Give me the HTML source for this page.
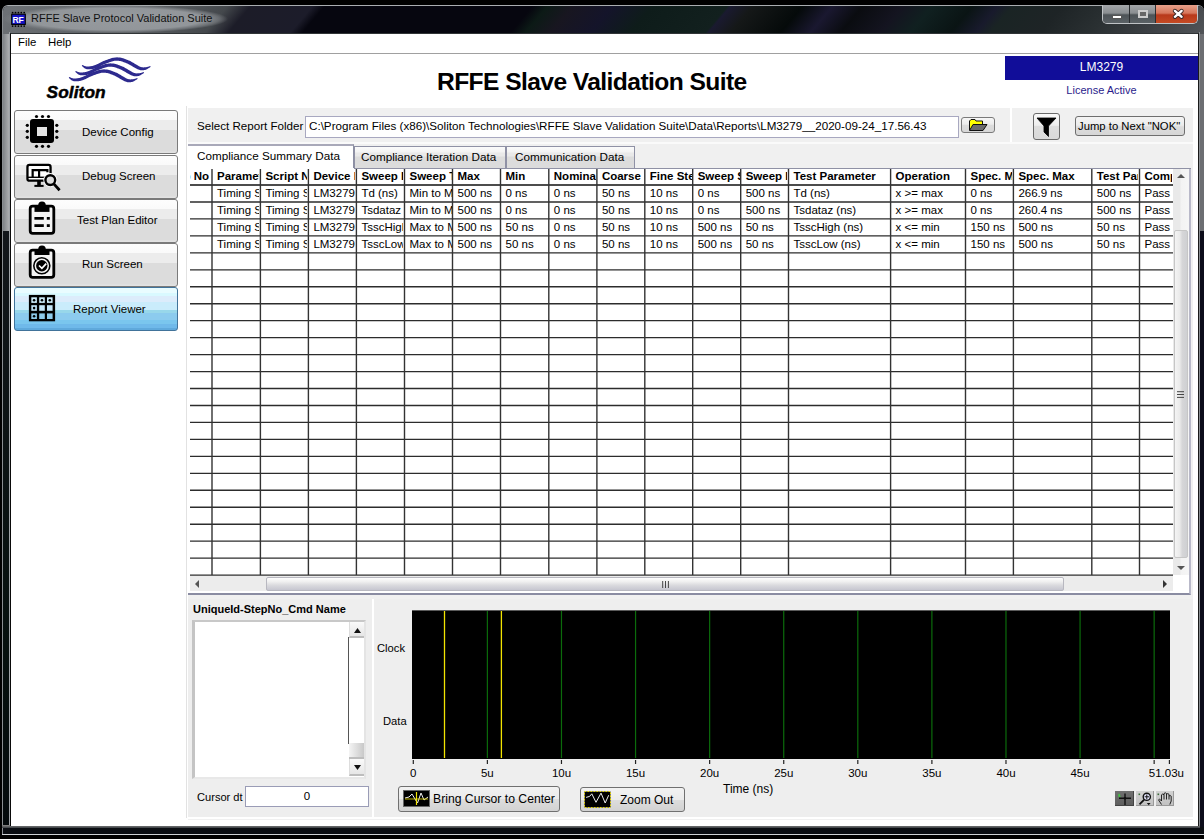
<!DOCTYPE html>
<html><head><meta charset="utf-8">
<style>
*{box-sizing:border-box;margin:0;padding:0}
html,body{width:1204px;height:839px;overflow:hidden;background:#000;font-family:"Liberation Sans",sans-serif;color:#000}
.a{position:absolute}
.t{position:absolute;white-space:nowrap;line-height:1}
.nb{left:14px;width:164px;height:44px;border:1px solid #7a7a7a;border-radius:3px;background:linear-gradient(#fdfdfd 0,#fafafa 8.5px,#ececec 9px,#ececec 19px,#dcdcdc 19.5px,#dcdcdc 40px,#e2e2e2 41px)}
.nb.blue{border-color:#41739a;background:linear-gradient(#e9fcff 0,#e9fcff 5.5px,#d9f9ff 5.5px,#d9f9ff 8.5px,#dcecfb 8.5px,#dcecfb 14.5px,#caecfb 14.5px,#caecfb 22.5px,#98d7ea 22.5px,#98d7ea 25.5px,#8ccbee 25.5px,#8ccbee 32.5px,#7ac6ee 32.5px,#7ac6ee 36.5px,#6fb9ea 36.5px,#6fb9ea 40.5px,#5fa9dc 40.5px)}
.tab{top:146px;height:23px;border:1px solid #8f91a5;border-bottom:none;background:linear-gradient(#fbfbfb 0,#f3f3f3 5px,#e9e9e9 6px,#e9e9e9 9px,#dcdcdc 10px,#dcdcdc 100%)}
.c{position:absolute;height:16px;overflow:hidden;white-space:nowrap;font-size:11.5px;line-height:16px;padding-left:4px}
.c.h{font-weight:bold;font-size:11.5px}
.btn{border:1px solid #707070;border-radius:3px;background:linear-gradient(#f2f2f2 0,#ebebeb 50%,#dddddd 51%,#d2d2d2 100%)}
</style></head><body>
<!-- window frame -->
<div class="a" style="left:2px;top:5px;width:1202px;height:830px;border-radius:6px 6px 0 0;overflow:hidden;background:#0a0d12;border-top:1px solid #a9adb0;border-left:1px solid #8a8e92">
 <div class="a" style="left:-20px;top:0;width:1244px;height:28px;transform:skewX(-40deg);transform-origin:50% 50%;background:linear-gradient(90deg,#6c7074 0,#6c7074 18px,#5a5e62 168px,#44484c 233px,#1c1c28 256px,#1c1c2a 318px,#06060f 330px,#06060f 538px,#0c1a16 553px,#181620 578px,#14142a 618px,#0e1c1a 658px,#12201e 733px,#1a1a30 736px,#151818 758px,#050a0a 808px,#1a1830 838px,#0a0c10 868px,#141420 908px,#102020 938px,#0a1414 978px,#181a2c 1003px,#1a2424 1018px,#1e2426 1068px,#2a3032 1120px,#3a3e42 1170px,#55585c 1244px)"></div>
<div class="a" style="left:0;top:28px;width:7px;height:197px;background:linear-gradient(90deg,#7e8286,#b4b6b8)"></div>
 <div class="a" style="left:1196px;top:28px;width:6px;height:197px;background:#6c6e72"></div>
 <div class="a" style="left:0;top:225px;width:7px;height:596px;background:linear-gradient(#12161a,#06100e 70%,#040a0c)"></div>
 <div class="a" style="left:1196px;top:225px;width:6px;height:596px;background:#0c0c1a"></div>
</div>
<div class="a" style="left:9px;top:32px;width:1px;height:795px;background:#a0a4a8"></div>
<div class="a" style="left:1199px;top:32px;width:1px;height:795px;background:#8a8e92"></div>
<div class="a" style="left:2px;top:834px;width:1202px;height:1px;background:#cfd3d6"></div>
<div class="a" style="left:2px;top:825px;width:1198px;height:3px;background:linear-gradient(#8a8a8a,#3a3e42)"></div>
<!-- title glow -->
<div class="a" style="left:2px;top:5px;width:226px;height:28px;background:radial-gradient(closest-side,rgba(150,154,158,1) 0%,rgba(146,150,154,1) 78%,rgba(120,124,128,.7) 92%,rgba(100,104,108,0) 100%)"></div>
<svg class="a" style="left:0;top:0" width="40" height="40">
 <rect x="11.7" y="14.2" width="13.6" height="10.2" fill="#1414c8" stroke="#000" stroke-width="1.1"/>
 <g fill="#000"><circle cx="12.6" cy="12.6" r="0.9"/><circle cx="15.5" cy="12.6" r="0.9"/><circle cx="18.4" cy="12.6" r="0.9"/><circle cx="21.3" cy="12.6" r="0.9"/><circle cx="24.2" cy="12.6" r="0.9"/>
 <circle cx="12.6" cy="26.1" r="0.9"/><circle cx="15.5" cy="26.1" r="0.9"/><circle cx="18.4" cy="26.1" r="0.9"/><circle cx="21.3" cy="26.1" r="0.9"/><circle cx="24.2" cy="26.1" r="0.9"/></g>
</svg>
<div class="t" style="left:12.6px;top:15.3px;font:bold 8.6px 'Liberation Sans';color:#fff;letter-spacing:-0.3px">RF</div>
<div class="t" style="left:31px;top:13px;font-size:11px;color:#111">RFFE Slave Protocol Validation Suite</div>
<!-- caption buttons -->
<div class="a" style="left:1102px;top:5px;width:96px;height:19px;border:1px solid #bfc3c6;border-top:none;border-radius:0 0 5px 5px;overflow:hidden;background:#555">
 <div class="a" style="left:0;top:0;width:26px;height:18px;background:linear-gradient(#a3a6a9,#8a8e91 45%,#4d5357 55%,#5b6266)"></div>
 <div class="a" style="left:26px;top:0;width:26px;height:18px;background:linear-gradient(#a3a6a9,#8a8e91 45%,#4d5357 55%,#5b6266);border-left:1px solid #2a2d30"></div>
 <div class="a" style="left:52px;top:0;width:44px;height:18px;background:linear-gradient(#e7a08a,#d6775b 45%,#b8391a 55%,#c44a24);border-left:1px solid #2a2d30"></div>
 <div class="a" style="left:9px;top:10px;width:10px;height:4px;background:#fff;border:1px solid #555"></div>
 <div class="a" style="left:35px;top:5px;width:10px;height:8px;border:2px solid #ccc;background:#666"></div>
 <svg class="a" style="left:60px;top:0" width="30" height="18"><path d="M11.9,5.9 L18.6,11.8 M18.6,5.9 L11.9,11.8" stroke="#3a2a28" stroke-width="4.2" stroke-linecap="round"/><path d="M11.9,5.9 L18.6,11.8 M18.6,5.9 L11.9,11.8" stroke="#fff" stroke-width="2.4" stroke-linecap="round"/></svg>
</div>
<!-- client -->
<div class="a" id="client" style="left:10px;top:33px;width:1189px;height:793px;background:#fff;border-left:1px solid #0a0a0a;border-top:1px solid #303436;border-right:1px solid #1a1a1a"></div>
<div class="a" style="left:11px;top:53px;width:1187px;height:1px;background:#a0a0a0"></div>
<div class="t" style="left:18px;top:37.3px;font-size:11.4px">File</div>
<div class="t" style="left:48px;top:37.3px;font-size:11.4px">Help</div>

<!-- header -->
<svg class="a" style="left:0;top:0" width="170" height="100"><g fill="#2d2a8e"><path d="M81.81,65.75 L81.99,65.94 L82.20,66.18 L82.47,66.45 L82.78,66.76 L83.14,67.09 L83.54,67.44 L83.98,67.78 L84.47,68.13 L84.99,68.45 L85.56,68.75 L86.18,69.00 L86.83,69.19 L87.46,69.26 L88.08,69.30 L88.73,69.32 L89.40,69.32 L90.09,69.28 L90.79,69.23 L91.52,69.14 L92.27,69.03 L93.04,68.89 L93.83,68.72 L94.64,68.51 L95.48,68.27 L96.36,67.97 L97.27,67.61 L98.19,67.20 L99.13,66.76 L100.07,66.29 L101.02,65.82 L101.97,65.34 L102.92,64.87 L103.86,64.43 L104.78,64.01 L105.67,63.63 L106.55,63.30 L107.46,62.98 L108.38,62.65 L109.29,62.33 L110.19,62.02 L111.08,61.73 L111.96,61.46 L112.83,61.22 L113.68,61.02 L114.53,60.85 L115.36,60.74 L116.18,60.67 L116.99,60.65 L117.80,60.69 L118.62,60.78 L119.45,60.92 L120.29,61.10 L121.15,61.32 L122.01,61.58 L122.87,61.86 L123.75,62.18 L124.64,62.52 L125.53,62.87 L126.43,63.24 L127.32,63.61 L128.19,63.99 L129.09,64.43 L130.02,64.93 L130.98,65.48 L131.95,66.04 L132.92,66.63 L133.88,67.21 L134.83,67.77 L135.76,68.30 L136.66,68.79 L137.54,69.22 L138.37,69.58 L139.14,69.82 L139.84,70.01 L140.49,70.15 L141.12,70.25 L141.71,70.30 L142.27,70.31 L142.80,70.29 L143.30,70.24 L143.79,70.17 L144.25,70.08 L144.71,69.99 L145.21,69.88 L145.76,69.70 L146.34,69.46 L146.89,69.20 L147.44,68.91 L147.96,68.60 L148.47,68.29 L148.95,67.98 L149.39,67.67 L149.78,67.39 L150.13,67.13 L150.41,66.91 L150.64,66.72 L150.36,66.08 L150.06,66.13 L149.69,66.21 L149.26,66.33 L148.80,66.48 L148.30,66.63 L147.78,66.79 L147.25,66.94 L146.71,67.08 L146.18,67.19 L145.68,67.28 L145.22,67.32 L144.79,67.32 L144.35,67.34 L143.92,67.37 L143.52,67.38 L143.14,67.38 L142.78,67.36 L142.42,67.31 L142.05,67.25 L141.66,67.16 L141.23,67.04 L140.75,66.88 L140.22,66.67 L139.63,66.42 L138.98,66.14 L138.25,65.77 L137.44,65.32 L136.58,64.81 L135.66,64.26 L134.71,63.67 L133.72,63.08 L132.72,62.48 L131.71,61.90 L130.69,61.34 L129.68,60.83 L128.68,60.39 L127.74,60.01 L126.80,59.65 L125.86,59.29 L124.91,58.95 L123.96,58.62 L122.99,58.32 L122.02,58.05 L121.04,57.82 L120.05,57.62 L119.04,57.48 L118.03,57.38 L117.01,57.35 L115.99,57.38 L114.97,57.48 L113.97,57.63 L112.98,57.83 L112.01,58.07 L111.04,58.34 L110.09,58.64 L109.14,58.96 L108.21,59.29 L107.29,59.63 L106.37,59.96 L105.45,60.30 L104.48,60.67 L103.49,61.10 L102.50,61.55 L101.52,62.03 L100.56,62.52 L99.60,63.01 L98.67,63.48 L97.76,63.94 L96.88,64.36 L96.05,64.74 L95.26,65.06 L94.52,65.33 L93.80,65.56 L93.09,65.76 L92.40,65.93 L91.73,66.08 L91.08,66.20 L90.46,66.30 L89.85,66.37 L89.27,66.42 L88.71,66.45 L88.17,66.45 L87.65,66.44 L87.17,66.41 L86.74,66.42 L86.31,66.39 L85.85,66.32 L85.39,66.20 L84.92,66.05 L84.46,65.89 L84.01,65.71 L83.59,65.53 L83.19,65.37 L82.82,65.22 L82.48,65.11 L82.19,65.05Z"/><path d="M75.31,71.75 L75.49,71.94 L75.70,72.18 L75.97,72.45 L76.28,72.76 L76.64,73.09 L77.04,73.44 L77.48,73.78 L77.97,74.13 L78.49,74.45 L79.06,74.75 L79.68,75.00 L80.33,75.19 L80.96,75.26 L81.58,75.30 L82.23,75.32 L82.90,75.32 L83.59,75.28 L84.29,75.23 L85.02,75.14 L85.77,75.03 L86.54,74.89 L87.33,74.72 L88.14,74.51 L88.98,74.27 L89.86,73.97 L90.77,73.61 L91.69,73.20 L92.63,72.76 L93.57,72.29 L94.52,71.82 L95.47,71.34 L96.42,70.87 L97.36,70.43 L98.28,70.01 L99.17,69.63 L100.05,69.30 L100.96,68.98 L101.88,68.65 L102.79,68.33 L103.69,68.02 L104.58,67.73 L105.46,67.46 L106.33,67.22 L107.18,67.02 L108.03,66.85 L108.86,66.74 L109.68,66.67 L110.49,66.65 L111.30,66.69 L112.12,66.78 L112.95,66.92 L113.79,67.10 L114.65,67.32 L115.51,67.58 L116.37,67.86 L117.25,68.18 L118.14,68.52 L119.03,68.87 L119.93,69.24 L120.82,69.61 L121.69,69.99 L122.59,70.43 L123.52,70.93 L124.48,71.48 L125.45,72.04 L126.42,72.63 L127.38,73.21 L128.33,73.77 L129.26,74.30 L130.16,74.79 L131.04,75.22 L131.87,75.58 L132.64,75.82 L133.34,76.01 L133.99,76.15 L134.62,76.25 L135.21,76.30 L135.77,76.31 L136.30,76.29 L136.80,76.24 L137.29,76.17 L137.75,76.08 L138.21,75.99 L138.71,75.88 L139.26,75.70 L139.84,75.46 L140.39,75.20 L140.94,74.91 L141.46,74.60 L141.97,74.29 L142.45,73.98 L142.89,73.67 L143.28,73.39 L143.63,73.13 L143.91,72.91 L144.14,72.72 L143.86,72.08 L143.56,72.13 L143.19,72.21 L142.76,72.33 L142.30,72.48 L141.80,72.63 L141.28,72.79 L140.75,72.94 L140.21,73.08 L139.68,73.19 L139.18,73.28 L138.72,73.32 L138.29,73.32 L137.85,73.34 L137.42,73.37 L137.02,73.38 L136.64,73.38 L136.28,73.36 L135.92,73.31 L135.55,73.25 L135.16,73.16 L134.73,73.04 L134.25,72.88 L133.72,72.67 L133.13,72.42 L132.48,72.14 L131.75,71.77 L130.94,71.32 L130.08,70.81 L129.16,70.26 L128.21,69.67 L127.22,69.08 L126.22,68.48 L125.21,67.90 L124.19,67.34 L123.18,66.83 L122.18,66.39 L121.24,66.01 L120.30,65.65 L119.36,65.29 L118.41,64.95 L117.46,64.62 L116.49,64.32 L115.52,64.05 L114.54,63.82 L113.55,63.62 L112.54,63.48 L111.53,63.38 L110.51,63.35 L109.49,63.38 L108.47,63.48 L107.47,63.63 L106.48,63.83 L105.51,64.07 L104.54,64.34 L103.59,64.64 L102.64,64.96 L101.71,65.29 L100.79,65.63 L99.87,65.96 L98.95,66.30 L97.98,66.67 L96.99,67.10 L96.00,67.55 L95.02,68.03 L94.06,68.52 L93.10,69.01 L92.17,69.48 L91.26,69.94 L90.38,70.36 L89.55,70.74 L88.76,71.06 L88.02,71.33 L87.30,71.56 L86.59,71.76 L85.90,71.93 L85.23,72.08 L84.58,72.20 L83.96,72.30 L83.35,72.37 L82.77,72.42 L82.21,72.45 L81.67,72.45 L81.15,72.44 L80.67,72.41 L80.24,72.42 L79.81,72.39 L79.35,72.32 L78.89,72.20 L78.42,72.05 L77.96,71.89 L77.51,71.71 L77.09,71.53 L76.69,71.37 L76.32,71.22 L75.98,71.11 L75.69,71.05Z"/><path d="M68.81,77.75 L68.99,77.94 L69.20,78.18 L69.47,78.45 L69.78,78.76 L70.14,79.09 L70.54,79.44 L70.98,79.78 L71.47,80.13 L71.99,80.45 L72.56,80.75 L73.18,81.00 L73.83,81.19 L74.46,81.26 L75.08,81.30 L75.73,81.32 L76.40,81.32 L77.09,81.28 L77.79,81.23 L78.52,81.14 L79.27,81.03 L80.04,80.89 L80.83,80.72 L81.64,80.51 L82.48,80.27 L83.36,79.97 L84.27,79.61 L85.19,79.20 L86.13,78.76 L87.07,78.29 L88.02,77.82 L88.97,77.34 L89.92,76.87 L90.86,76.43 L91.78,76.01 L92.67,75.63 L93.55,75.30 L94.46,74.98 L95.38,74.65 L96.29,74.33 L97.19,74.02 L98.08,73.73 L98.96,73.46 L99.83,73.22 L100.68,73.02 L101.53,72.85 L102.36,72.74 L103.18,72.67 L103.99,72.65 L104.80,72.69 L105.62,72.78 L106.45,72.92 L107.29,73.10 L108.15,73.32 L109.01,73.58 L109.87,73.86 L110.75,74.18 L111.64,74.52 L112.53,74.87 L113.43,75.24 L114.32,75.61 L115.19,75.99 L116.09,76.43 L117.02,76.93 L117.98,77.48 L118.95,78.04 L119.92,78.63 L120.88,79.21 L121.83,79.77 L122.76,80.30 L123.66,80.79 L124.54,81.22 L125.37,81.58 L126.14,81.82 L126.84,82.01 L127.49,82.15 L128.12,82.25 L128.71,82.30 L129.27,82.31 L129.80,82.29 L130.30,82.24 L130.79,82.17 L131.25,82.08 L131.71,81.99 L132.21,81.88 L132.76,81.70 L133.34,81.46 L133.89,81.20 L134.44,80.91 L134.96,80.60 L135.47,80.29 L135.95,79.98 L136.39,79.67 L136.78,79.39 L137.13,79.13 L137.41,78.91 L137.64,78.72 L137.36,78.08 L137.06,78.13 L136.69,78.21 L136.26,78.33 L135.80,78.48 L135.30,78.63 L134.78,78.79 L134.25,78.94 L133.71,79.08 L133.18,79.19 L132.68,79.28 L132.22,79.32 L131.79,79.32 L131.35,79.34 L130.92,79.37 L130.52,79.38 L130.14,79.38 L129.78,79.36 L129.42,79.31 L129.05,79.25 L128.66,79.16 L128.23,79.04 L127.75,78.88 L127.22,78.67 L126.63,78.42 L125.98,78.14 L125.25,77.77 L124.44,77.32 L123.58,76.81 L122.66,76.26 L121.71,75.67 L120.72,75.08 L119.72,74.48 L118.71,73.90 L117.69,73.34 L116.68,72.83 L115.68,72.39 L114.74,72.01 L113.80,71.65 L112.86,71.29 L111.91,70.95 L110.96,70.62 L109.99,70.32 L109.02,70.05 L108.04,69.82 L107.05,69.62 L106.04,69.48 L105.03,69.38 L104.01,69.35 L102.99,69.38 L101.97,69.48 L100.97,69.63 L99.98,69.83 L99.01,70.07 L98.04,70.34 L97.09,70.64 L96.14,70.96 L95.21,71.29 L94.29,71.63 L93.37,71.96 L92.45,72.30 L91.48,72.67 L90.49,73.10 L89.50,73.55 L88.52,74.03 L87.56,74.52 L86.60,75.01 L85.67,75.48 L84.76,75.94 L83.88,76.36 L83.05,76.74 L82.26,77.06 L81.52,77.33 L80.80,77.56 L80.09,77.76 L79.40,77.93 L78.73,78.08 L78.08,78.20 L77.46,78.30 L76.85,78.37 L76.27,78.42 L75.71,78.45 L75.17,78.45 L74.65,78.44 L74.17,78.41 L73.74,78.42 L73.31,78.39 L72.85,78.32 L72.39,78.20 L71.92,78.05 L71.46,77.89 L71.01,77.71 L70.59,77.53 L70.19,77.37 L69.82,77.22 L69.48,77.11 L69.19,77.05Z"/></g></svg>
<div class="t" style="left:46.5px;top:81.5px;font:italic bold 17.3px 'Liberation Sans';-webkit-text-stroke:0.5px #000;letter-spacing:0.1px">Soliton</div>
<div class="t" style="left:437px;top:68px;font:bold 24.6px 'Liberation Sans';letter-spacing:-0.58px">RFFE Slave Validation Suite</div>
<div class="a" style="left:1005px;top:56px;width:193px;height:24px;background:#110d99"></div>
<div class="t" style="left:1005px;top:61px;width:193px;text-align:center;font-size:12px;color:#fff">LM3279</div>
<div class="t" style="left:1005px;top:84.5px;width:193px;text-align:center;font-size:11px;color:#2a1c8c">License Active</div>
<!-- nav buttons -->
<div class="a nb" style="top:110px"></div>
<div class="a nb" style="top:154.5px"></div>
<div class="a nb" style="top:198.5px"></div>
<div class="a nb" style="top:242.5px"></div>
<div class="a nb blue" style="top:286.5px"></div>
<div class="t" style="left:82px;top:126.8px;font-size:11.5px">Device Config</div>
<div class="t" style="left:82px;top:170.8px;font-size:11.5px">Debug Screen</div>
<div class="t" style="left:77px;top:214.8px;font-size:11.5px">Test Plan Editor</div>
<div class="t" style="left:82px;top:258.8px;font-size:11.5px">Run Screen</div>
<div class="t" style="left:73px;top:303.8px;font-size:11.5px">Report Viewer</div>
<!-- main panel -->
<div class="a" style="left:186px;top:106px;width:1px;height:712px;background:#e2e2e2"></div>
<div class="a" style="left:188px;top:108px;width:1005px;height:34px;background:#f0f0f0"></div>
<div class="a" style="left:1010px;top:108px;width:2px;height:34px;background:#fff"></div>
<div class="t" style="left:197px;top:120px;font-size:11.6px">Select Report Folder</div>
<div class="a" style="left:305px;top:116px;width:654px;height:22px;background:#fff;border:1px solid #a8a8c0"></div>
<div class="t" style="left:309px;top:120px;font-size:11.65px;letter-spacing:0px">C:\Program Files (x86)\Soliton Technologies\RFFE Slave Validation Suite\Data\Reports\LM3279__2020-09-24_17.56.43</div>

<!-- tabs -->
<div class="a" style="left:188px;top:142px;width:1005px;height:2px;background:#fafafa"></div>
<div class="a" style="left:188px;top:144px;width:1005px;height:455px;background:#f0f0f0"></div>
<div class="a" style="left:188px;top:144px;width:166px;height:26px;background:#fff;border-top:2px solid #a9a9b9;border-right:1px solid #8c8fa3"></div>
<div class="t" style="left:197px;top:150px;font-size:11.7px">Compliance Summary Data</div>
<div class="a tab" style="left:354px;top:146px;width:152px"></div>
<div class="t" style="left:361px;top:151px;font-size:11.7px">Compliance Iteration Data</div>
<div class="a tab" style="left:506px;top:146px;width:129px"></div>
<div class="t" style="left:515px;top:151px;font-size:11.7px">Communication Data</div>
<!-- table body -->
<div class="a" style="left:188px;top:168px;width:1003px;height:427px;background:#fff;border-right:2px solid #b9b9c9;border-bottom:2px solid #8a8ca2"></div>
<div class="a" style="left:354px;top:168px;width:837px;height:1px;background:#8f91a5"></div>
<svg class="a" style="left:0;top:0" width="1204" height="839">
<line x1="190" x2="1173" y1="201.96" y2="201.96" stroke="#2c2c2c" stroke-width="1.35"/>
<line x1="190" x2="1173" y1="218.92" y2="218.92" stroke="#2c2c2c" stroke-width="1.35"/>
<line x1="190" x2="1173" y1="235.88" y2="235.88" stroke="#2c2c2c" stroke-width="1.35"/>
<line x1="190" x2="1173" y1="252.84" y2="252.84" stroke="#2c2c2c" stroke-width="1.35"/>
<line x1="190" x2="1173" y1="269.80" y2="269.80" stroke="#2c2c2c" stroke-width="1.35"/>
<line x1="190" x2="1173" y1="286.76" y2="286.76" stroke="#2c2c2c" stroke-width="1.35"/>
<line x1="190" x2="1173" y1="303.72" y2="303.72" stroke="#2c2c2c" stroke-width="1.35"/>
<line x1="190" x2="1173" y1="320.68" y2="320.68" stroke="#2c2c2c" stroke-width="1.35"/>
<line x1="190" x2="1173" y1="337.64" y2="337.64" stroke="#2c2c2c" stroke-width="1.35"/>
<line x1="190" x2="1173" y1="354.60" y2="354.60" stroke="#2c2c2c" stroke-width="1.35"/>
<line x1="190" x2="1173" y1="371.56" y2="371.56" stroke="#2c2c2c" stroke-width="1.35"/>
<line x1="190" x2="1173" y1="388.52" y2="388.52" stroke="#2c2c2c" stroke-width="1.35"/>
<line x1="190" x2="1173" y1="405.48" y2="405.48" stroke="#2c2c2c" stroke-width="1.35"/>
<line x1="190" x2="1173" y1="422.44" y2="422.44" stroke="#2c2c2c" stroke-width="1.35"/>
<line x1="190" x2="1173" y1="439.40" y2="439.40" stroke="#2c2c2c" stroke-width="1.35"/>
<line x1="190" x2="1173" y1="456.36" y2="456.36" stroke="#2c2c2c" stroke-width="1.35"/>
<line x1="190" x2="1173" y1="473.32" y2="473.32" stroke="#2c2c2c" stroke-width="1.35"/>
<line x1="190" x2="1173" y1="490.28" y2="490.28" stroke="#2c2c2c" stroke-width="1.35"/>
<line x1="190" x2="1173" y1="507.24" y2="507.24" stroke="#2c2c2c" stroke-width="1.35"/>
<line x1="190" x2="1173" y1="524.20" y2="524.20" stroke="#2c2c2c" stroke-width="1.35"/>
<line x1="190" x2="1173" y1="541.16" y2="541.16" stroke="#2c2c2c" stroke-width="1.35"/>
<line x1="190" x2="1173" y1="558.12" y2="558.12" stroke="#2c2c2c" stroke-width="1.35"/>
<line x1="190" x2="1173" y1="575.08" y2="575.08" stroke="#2c2c2c" stroke-width="1.35"/>
<line x1="190" x2="1173" y1="185" y2="185" stroke="#111" stroke-width="1.5"/>
<line x1="212" x2="212" y1="169" y2="575.08" stroke="#333" stroke-width="1.4"/>
<line x1="260.4" x2="260.4" y1="169" y2="575.08" stroke="#333" stroke-width="1.4"/>
<line x1="308.4" x2="308.4" y1="169" y2="575.08" stroke="#333" stroke-width="1.4"/>
<line x1="356.4" x2="356.4" y1="169" y2="575.08" stroke="#333" stroke-width="1.4"/>
<line x1="404.5" x2="404.5" y1="169" y2="575.08" stroke="#333" stroke-width="1.4"/>
<line x1="452.5" x2="452.5" y1="169" y2="575.08" stroke="#333" stroke-width="1.4"/>
<line x1="500.5" x2="500.5" y1="169" y2="575.08" stroke="#333" stroke-width="1.4"/>
<line x1="548.8" x2="548.8" y1="169" y2="575.08" stroke="#333" stroke-width="1.4"/>
<line x1="596.9" x2="596.9" y1="169" y2="575.08" stroke="#333" stroke-width="1.4"/>
<line x1="644.8" x2="644.8" y1="169" y2="575.08" stroke="#333" stroke-width="1.4"/>
<line x1="692.7" x2="692.7" y1="169" y2="575.08" stroke="#333" stroke-width="1.4"/>
<line x1="740.7" x2="740.7" y1="169" y2="575.08" stroke="#333" stroke-width="1.4"/>
<line x1="788.5" x2="788.5" y1="169" y2="575.08" stroke="#333" stroke-width="1.4"/>
<line x1="890.6" x2="890.6" y1="169" y2="575.08" stroke="#333" stroke-width="1.4"/>
<line x1="965.5" x2="965.5" y1="169" y2="575.08" stroke="#333" stroke-width="1.4"/>
<line x1="1013.4" x2="1013.4" y1="169" y2="575.08" stroke="#333" stroke-width="1.4"/>
<line x1="1091.8" x2="1091.8" y1="169" y2="575.08" stroke="#333" stroke-width="1.4"/>
<line x1="1139.5" x2="1139.5" y1="169" y2="575.08" stroke="#333" stroke-width="1.4"/>
</svg>
<div class="c h" style="left:190px;top:168px;width:20.0px"><span style="position:absolute;right:1px;top:0">Step No</span></div>
<div class="c h" style="left:213.0px;top:168px;width:46.4px">Parameter</div>
<div class="c h" style="left:261.4px;top:168px;width:46.0px">Script Name</div>
<div class="c h" style="left:309.4px;top:168px;width:46.0px">Device ID</div>
<div class="c h" style="left:357.4px;top:168px;width:46.1px">Sweep Parameter</div>
<div class="c h" style="left:405.5px;top:168px;width:46.0px">Sweep Type</div>
<div class="c h" style="left:453.5px;top:168px;width:46.0px">Max</div>
<div class="c h" style="left:501.5px;top:168px;width:46.3px">Min</div>
<div class="c h" style="left:549.8px;top:168px;width:46.1px">Nominal</div>
<div class="c h" style="left:597.9px;top:168px;width:45.9px">Coarse Step</div>
<div class="c h" style="left:645.8px;top:168px;width:45.9px">Fine Step</div>
<div class="c h" style="left:693.7px;top:168px;width:46.0px">Sweep Start</div>
<div class="c h" style="left:741.7px;top:168px;width:45.8px">Sweep End</div>
<div class="c h" style="left:789.5px;top:168px;width:100.1px">Test Parameter</div>
<div class="c h" style="left:891.6px;top:168px;width:72.9px">Operation</div>
<div class="c h" style="left:966.5px;top:168px;width:45.9px">Spec. Min</div>
<div class="c h" style="left:1014.4px;top:168px;width:76.4px">Spec. Max</div>
<div class="c h" style="left:1092.8px;top:168px;width:45.7px">Test Param Value</div>
<div class="c h" style="left:1140.5px;top:168px;width:31.5px">Compliance</div>
<div class="c" style="left:213.0px;top:185.00px;width:46.4px">Timing Spec</div>
<div class="c" style="left:261.4px;top:185.00px;width:46.0px">Timing Spec</div>
<div class="c" style="left:309.4px;top:185.00px;width:46.0px">LM3279</div>
<div class="c" style="left:357.4px;top:185.00px;width:46.1px">Td (ns)</div>
<div class="c" style="left:405.5px;top:185.00px;width:46.0px">Min to Max</div>
<div class="c" style="left:453.5px;top:185.00px;width:46.0px">500 ns</div>
<div class="c" style="left:501.5px;top:185.00px;width:46.3px">0 ns</div>
<div class="c" style="left:549.8px;top:185.00px;width:46.1px">0 ns</div>
<div class="c" style="left:597.9px;top:185.00px;width:45.9px">50 ns</div>
<div class="c" style="left:645.8px;top:185.00px;width:45.9px">10 ns</div>
<div class="c" style="left:693.7px;top:185.00px;width:46.0px">0 ns</div>
<div class="c" style="left:741.7px;top:185.00px;width:45.8px">500 ns</div>
<div class="c" style="left:789.5px;top:185.00px;width:100.1px">Td (ns)</div>
<div class="c" style="left:891.6px;top:185.00px;width:72.9px">x &gt;= max</div>
<div class="c" style="left:966.5px;top:185.00px;width:45.9px">0 ns</div>
<div class="c" style="left:1014.4px;top:185.00px;width:76.4px">266.9 ns</div>
<div class="c" style="left:1092.8px;top:185.00px;width:45.7px">500 ns</div>
<div class="c" style="left:1140.5px;top:185.00px;width:31.5px">Pass</div>
<div class="c" style="left:213.0px;top:201.96px;width:46.4px">Timing Spec</div>
<div class="c" style="left:261.4px;top:201.96px;width:46.0px">Timing Spec</div>
<div class="c" style="left:309.4px;top:201.96px;width:46.0px">LM3279</div>
<div class="c" style="left:357.4px;top:201.96px;width:46.1px">Tsdataz (ns)</div>
<div class="c" style="left:405.5px;top:201.96px;width:46.0px">Min to Max</div>
<div class="c" style="left:453.5px;top:201.96px;width:46.0px">500 ns</div>
<div class="c" style="left:501.5px;top:201.96px;width:46.3px">0 ns</div>
<div class="c" style="left:549.8px;top:201.96px;width:46.1px">0 ns</div>
<div class="c" style="left:597.9px;top:201.96px;width:45.9px">50 ns</div>
<div class="c" style="left:645.8px;top:201.96px;width:45.9px">10 ns</div>
<div class="c" style="left:693.7px;top:201.96px;width:46.0px">0 ns</div>
<div class="c" style="left:741.7px;top:201.96px;width:45.8px">500 ns</div>
<div class="c" style="left:789.5px;top:201.96px;width:100.1px">Tsdataz (ns)</div>
<div class="c" style="left:891.6px;top:201.96px;width:72.9px">x &gt;= max</div>
<div class="c" style="left:966.5px;top:201.96px;width:45.9px">0 ns</div>
<div class="c" style="left:1014.4px;top:201.96px;width:76.4px">260.4 ns</div>
<div class="c" style="left:1092.8px;top:201.96px;width:45.7px">500 ns</div>
<div class="c" style="left:1140.5px;top:201.96px;width:31.5px">Pass</div>
<div class="c" style="left:213.0px;top:218.92px;width:46.4px">Timing Spec</div>
<div class="c" style="left:261.4px;top:218.92px;width:46.0px">Timing Spec</div>
<div class="c" style="left:309.4px;top:218.92px;width:46.0px">LM3279</div>
<div class="c" style="left:357.4px;top:218.92px;width:46.1px">TsscHigh (ns)</div>
<div class="c" style="left:405.5px;top:218.92px;width:46.0px">Max to Min</div>
<div class="c" style="left:453.5px;top:218.92px;width:46.0px">500 ns</div>
<div class="c" style="left:501.5px;top:218.92px;width:46.3px">50 ns</div>
<div class="c" style="left:549.8px;top:218.92px;width:46.1px">0 ns</div>
<div class="c" style="left:597.9px;top:218.92px;width:45.9px">50 ns</div>
<div class="c" style="left:645.8px;top:218.92px;width:45.9px">10 ns</div>
<div class="c" style="left:693.7px;top:218.92px;width:46.0px">500 ns</div>
<div class="c" style="left:741.7px;top:218.92px;width:45.8px">50 ns</div>
<div class="c" style="left:789.5px;top:218.92px;width:100.1px">TsscHigh (ns)</div>
<div class="c" style="left:891.6px;top:218.92px;width:72.9px">x &lt;= min</div>
<div class="c" style="left:966.5px;top:218.92px;width:45.9px">150 ns</div>
<div class="c" style="left:1014.4px;top:218.92px;width:76.4px">500 ns</div>
<div class="c" style="left:1092.8px;top:218.92px;width:45.7px">50 ns</div>
<div class="c" style="left:1140.5px;top:218.92px;width:31.5px">Pass</div>
<div class="c" style="left:213.0px;top:235.88px;width:46.4px">Timing Spec</div>
<div class="c" style="left:261.4px;top:235.88px;width:46.0px">Timing Spec</div>
<div class="c" style="left:309.4px;top:235.88px;width:46.0px">LM3279</div>
<div class="c" style="left:357.4px;top:235.88px;width:46.1px">TsscLow (ns)</div>
<div class="c" style="left:405.5px;top:235.88px;width:46.0px">Max to Min</div>
<div class="c" style="left:453.5px;top:235.88px;width:46.0px">500 ns</div>
<div class="c" style="left:501.5px;top:235.88px;width:46.3px">50 ns</div>
<div class="c" style="left:549.8px;top:235.88px;width:46.1px">0 ns</div>
<div class="c" style="left:597.9px;top:235.88px;width:45.9px">50 ns</div>
<div class="c" style="left:645.8px;top:235.88px;width:45.9px">10 ns</div>
<div class="c" style="left:693.7px;top:235.88px;width:46.0px">500 ns</div>
<div class="c" style="left:741.7px;top:235.88px;width:45.8px">50 ns</div>
<div class="c" style="left:789.5px;top:235.88px;width:100.1px">TsscLow (ns)</div>
<div class="c" style="left:891.6px;top:235.88px;width:72.9px">x &lt;= min</div>
<div class="c" style="left:966.5px;top:235.88px;width:45.9px">150 ns</div>
<div class="c" style="left:1014.4px;top:235.88px;width:76.4px">500 ns</div>
<div class="c" style="left:1092.8px;top:235.88px;width:45.7px">50 ns</div>
<div class="c" style="left:1140.5px;top:235.88px;width:31.5px">Pass</div>
<!-- vscroll -->
<div class="a" style="left:1173px;top:169px;width:16px;height:406px;background:linear-gradient(90deg,#e9e9e9 0,#e9e9e9 7px,#f3f3f3 8px,#f6f6f6 100%)"></div>
<div class="a" style="left:1174px;top:230px;width:14px;height:328px;border:1px solid #c6c6c6;border-radius:2px;background:linear-gradient(90deg,#f4f4f4 0,#eaeaea 40%,#d6d6d8 60%,#cfd0d3 100%)"></div>
<svg class="a" style="left:1176px;top:390px" width="10" height="10"><path d="M1,1.7 H8 M1,4.5 H8 M1,7.4 H8" stroke="#333" stroke-width="0.9"/></svg>
<svg class="a" style="left:1176px;top:172px" width="10" height="8"><path d="M1,6 L5,2 L9,6Z" fill="#555"/></svg>
<svg class="a" style="left:1176px;top:564px" width="10" height="8"><path d="M1,2 L5,6 L9,2Z" fill="#555"/></svg>
<!-- hscroll -->
<div class="a" style="left:190px;top:576px;width:983px;height:15px;background:#ececec"></div>
<div class="a" style="left:266px;top:577px;width:798px;height:14px;border:1px solid #b8b8c0;border-radius:2px;background:linear-gradient(#fdfdfd 0,#f0f0f0 30%,#dadade 60%,#c6c6d0 100%)"></div>
<svg class="a" style="left:661px;top:580px" width="10" height="10"><path d="M1.7,1 V8 M4.5,1 V8 M7.4,1 V8" stroke="#333" stroke-width="0.9"/></svg>
<svg class="a" style="left:193px;top:579px" width="8" height="10"><path d="M6,1 L2,5 L6,9Z" fill="#555"/></svg>
<svg class="a" style="left:1161px;top:579px" width="8" height="10"><path d="M2,1 L6,5 L2,9Z" fill="#333"/></svg>

<!-- bottom panel -->
<div class="a" style="left:188px;top:599px;width:184px;height:218px;background:#eeeeee"></div>
<div class="a" style="left:374px;top:599px;width:819px;height:218px;background:#eeeeee"></div><div class="a" style="left:188px;top:819px;width:1005px;height:1px;background:#f0f0f0"></div>
<div class="t" style="left:193px;top:603px;font:bold 11px 'Liberation Sans'">UniqueId-StepNo_Cmd Name</div>
<div class="a" style="left:192px;top:620px;width:174px;height:159px;background:#fff;border-top:2px solid #c8c8c8;border-left:3px solid #c4c4c4;border-right:2px solid #e4e4e4;border-bottom:2px solid #e8e8e8"></div>
<div class="a" style="left:348px;top:622px;width:16px;height:155px;background:#fff"></div>
<div class="a" style="left:348px;top:637px;width:1px;height:107px;background:#555"></div>
<div class="a" style="left:349px;top:622px;width:15px;height:16px;background:linear-gradient(#fafafa,#e6e6e6);border-bottom:2px solid #bdbdbd;border-left:1px solid #ddd"></div>
<div class="a" style="left:349px;top:743px;width:15px;height:16px;background:linear-gradient(90deg,#f4f4f4,#c9c9c9);border-bottom:2px solid #bdbdbd"></div>
<div class="a" style="left:349px;top:759px;width:15px;height:17px;background:linear-gradient(#fafafa,#e6e6e6);border-bottom:2px solid #bdbdbd;border-left:1px solid #ddd"></div>
<svg class="a" style="left:351px;top:625px" width="12" height="10"><path d="M3,8 L6.5,3 L10,8Z" fill="#111"/></svg>
<svg class="a" style="left:351px;top:762px" width="12" height="10"><path d="M3,3 L6.5,8 L10,3Z" fill="#111"/></svg>
<div class="t" style="left:197px;top:792px;font-size:11.1px">Cursor dt</div>
<div class="a" style="left:245px;top:786px;width:124px;height:21px;background:#fff;border:1px solid #9a9cb6"></div>
<div class="t" style="left:245px;top:791px;width:124px;text-align:center;font-size:11.5px">0</div>
<div class="t" style="left:377px;top:643px;font-size:11.2px">Clock</div>
<div class="t" style="left:383px;top:716px;font-size:11.2px">Data</div>
<div class="a" style="left:412px;top:610px;width:758px;height:149px;background:#000;border-top:1px solid #5a5a5a"></div>
<svg class="a" style="left:0;top:0" width="1204" height="839">
<line x1="413.30" x2="413.30" y1="760" y2="764" stroke="#222" stroke-width="1.2"/>
<line x1="487.38" x2="487.38" y1="611" y2="758" stroke="#0b6b0b" stroke-width="1.2"/>
<line x1="487.38" x2="487.38" y1="760" y2="764" stroke="#222" stroke-width="1.2"/>
<line x1="561.47" x2="561.47" y1="611" y2="758" stroke="#0b6b0b" stroke-width="1.2"/>
<line x1="561.47" x2="561.47" y1="760" y2="764" stroke="#222" stroke-width="1.2"/>
<line x1="635.56" x2="635.56" y1="611" y2="758" stroke="#0b6b0b" stroke-width="1.2"/>
<line x1="635.56" x2="635.56" y1="760" y2="764" stroke="#222" stroke-width="1.2"/>
<line x1="709.64" x2="709.64" y1="611" y2="758" stroke="#0b6b0b" stroke-width="1.2"/>
<line x1="709.64" x2="709.64" y1="760" y2="764" stroke="#222" stroke-width="1.2"/>
<line x1="783.73" x2="783.73" y1="611" y2="758" stroke="#0b6b0b" stroke-width="1.2"/>
<line x1="783.73" x2="783.73" y1="760" y2="764" stroke="#222" stroke-width="1.2"/>
<line x1="857.81" x2="857.81" y1="611" y2="758" stroke="#0b6b0b" stroke-width="1.2"/>
<line x1="857.81" x2="857.81" y1="760" y2="764" stroke="#222" stroke-width="1.2"/>
<line x1="931.89" x2="931.89" y1="611" y2="758" stroke="#0b6b0b" stroke-width="1.2"/>
<line x1="931.89" x2="931.89" y1="760" y2="764" stroke="#222" stroke-width="1.2"/>
<line x1="1005.98" x2="1005.98" y1="611" y2="758" stroke="#0b6b0b" stroke-width="1.2"/>
<line x1="1005.98" x2="1005.98" y1="760" y2="764" stroke="#222" stroke-width="1.2"/>
<line x1="1080.07" x2="1080.07" y1="611" y2="758" stroke="#0b6b0b" stroke-width="1.2"/>
<line x1="1080.07" x2="1080.07" y1="760" y2="764" stroke="#222" stroke-width="1.2"/>
<line x1="1154.15" x2="1154.15" y1="611" y2="758" stroke="#0b6b0b" stroke-width="1.2"/>
<line x1="1154.15" x2="1154.15" y1="760" y2="764" stroke="#222" stroke-width="1.2"/>
<line x1="1169.41" x2="1169.41" y1="760" y2="764" stroke="#222" stroke-width="1.2"/>
<line x1="444.5" x2="444.5" y1="611" y2="758" stroke="#f2e400" stroke-width="1.3"/>
<line x1="501.4" x2="501.4" y1="611" y2="758" stroke="#f2e400" stroke-width="1.3"/>
</svg>

<div class="t" style="left:383.30px;top:767.5px;width:60px;text-align:center;font-size:11.5px">0</div>
<div class="t" style="left:457.38px;top:767.5px;width:60px;text-align:center;font-size:11.5px">5u</div>
<div class="t" style="left:531.47px;top:767.5px;width:60px;text-align:center;font-size:11.5px">10u</div>
<div class="t" style="left:605.56px;top:767.5px;width:60px;text-align:center;font-size:11.5px">15u</div>
<div class="t" style="left:679.64px;top:767.5px;width:60px;text-align:center;font-size:11.5px">20u</div>
<div class="t" style="left:753.73px;top:767.5px;width:60px;text-align:center;font-size:11.5px">25u</div>
<div class="t" style="left:827.81px;top:767.5px;width:60px;text-align:center;font-size:11.5px">30u</div>
<div class="t" style="left:901.89px;top:767.5px;width:60px;text-align:center;font-size:11.5px">35u</div>
<div class="t" style="left:975.98px;top:767.5px;width:60px;text-align:center;font-size:11.5px">40u</div>
<div class="t" style="left:1050.07px;top:767.5px;width:60px;text-align:center;font-size:11.5px">45u</div>
<div class="t" style="left:1136.41px;top:767.5px;width:60px;text-align:center;font-size:11.5px">51.03u</div>
<div class="t" style="left:723px;top:783px;font-size:12px">Time (ns)</div>
<div class="a btn" style="left:398px;top:786px;width:162px;height:26px"></div>
<div class="t" style="left:433px;top:793px;font-size:12.2px">Bring Cursor to Center</div>
<div class="a btn" style="left:580px;top:786.5px;width:105px;height:25.5px"></div>
<div class="t" style="left:620px;top:794px;font-size:12px">Zoom Out</div>
<svg class="a" style="left:403px;top:790px" width="27" height="17">
 <rect x="0.5" y="0.5" width="26" height="16" fill="#000" stroke="#666"/>
 <path d="M2,8 L6,7 L9,4 L12,9 L14.5,13 L18,3 L21,10 L25,7" stroke="#eee" fill="none" stroke-width="1"/>
 <line x1="13.5" x2="13.5" y1="2" y2="15" stroke="#f2e400" stroke-width="1.2"/>
 <line x1="2" x2="25" y1="9" y2="9" stroke="#f2e400" stroke-width="0.8"/>
</svg>
<svg class="a" style="left:584px;top:791px" width="27" height="17">
 <rect x="0.5" y="0.5" width="26" height="16" fill="#000" stroke="#e8d800" stroke-dasharray="1.5 1.5"/>
 <path d="M2.1,6.4 L5.6,5.4 L7.8,2.8 L12,11.3 L17,2.1 L21.2,12 L24.7,4.2" stroke="#eee" fill="none" stroke-width="1"/>
</svg>
<!-- folder/filter/jump -->
<div class="a btn" style="left:961px;top:117px;width:34px;height:16px;border-color:#7a7a7a;background:linear-gradient(#f6f6f6 0,#ececec 45%,#dcdcdc 50%,#d8d8d8 100%)"></div>
<svg class="a" style="left:967px;top:118px" width="24" height="14">
 <path d="M2.5,12 L2.5,3 L4,1.5 L8,1.5 L9,3 L15.5,3 L15.5,6" fill="#ffff00" stroke="#111" stroke-width="1"/>
 <path d="M2.5,12.5 L6,6.5 L20,6.5 L16,12.5Z" fill="#6c6c6c" stroke="#111" stroke-width="1"/>
</svg>
<div class="a btn" style="left:1033px;top:113px;width:27px;height:27px;border-color:#6a6a6a;background:linear-gradient(#fafafa 0,#eeeeee 45%,#dedede 50%,#d9d9d9 100%)"></div>
<svg class="a" style="left:1033px;top:113px" width="27" height="27"><path d="M4,5 L23,5 L15.5,13 L15.5,23.5 L14,22 L11,19 L11,13Z" fill="#000" stroke="#000" stroke-width="0.8" stroke-linejoin="round"/></svg>
<div class="a btn" style="left:1075px;top:116px;width:110px;height:20px;border-color:#6e6e6e;background:linear-gradient(#f4f4f4 0,#ececec 45%,#dcdcdc 55%,#d6d6d6 100%)"></div>
<div class="t" style="left:1078px;top:121px;font-size:11.3px">Jump to Next "NOK"</div>
<!-- nav icons -->
<svg class="a" style="left:0;top:0" width="200" height="340">
 <g fill="#000">
  <rect x="30" y="119" width="24" height="24" rx="3"/>
  <circle cx="36.5" cy="116.5" r="1.6"/><circle cx="42.5" cy="116.5" r="1.6"/><circle cx="48.5" cy="116.5" r="1.6"/>
  <circle cx="36.5" cy="146.3" r="1.6"/><circle cx="42.5" cy="146.3" r="1.6"/><circle cx="48.5" cy="146.3" r="1.6"/>
  <circle cx="27.3" cy="125.3" r="1.6"/><circle cx="27.3" cy="131.3" r="1.6"/><circle cx="27.3" cy="137.3" r="1.6"/>
  <circle cx="56.8" cy="125.3" r="1.6"/><circle cx="56.8" cy="131.3" r="1.6"/><circle cx="56.8" cy="137.3" r="1.6"/>
 </g>
 <rect x="37" y="127" width="10" height="9" fill="#e4e4e4"/>
 <!-- debug -->
 <rect x="27.45" y="164.9" width="23.1" height="15.8" rx="2" fill="#fff" stroke="#000" stroke-width="2.3"/>
 <line x1="28" x2="46" y1="177.3" y2="177.3" stroke="#000" stroke-width="1.4"/>
 <path d="M32.65,177 V170.2 H47.4 V172.2 M39.1,170.2 V177" fill="none" stroke="#000" stroke-width="2.2"/>
 <rect x="37.2" y="181" width="3.6" height="4.2" fill="#000"/>
 <rect x="34.4" y="184.9" width="9.2" height="2" fill="#000"/>
 <circle cx="50.3" cy="180.1" r="7" fill="#fff"/>
 <circle cx="50.3" cy="180.1" r="4.9" fill="#dcdcdc" stroke="#000" stroke-width="2.4"/>
 <path d="M53.6,183.6 L59.6,190.2" stroke="#000" stroke-width="2.8"/>
 <!-- test plan -->
 <rect x="30.2" y="206.1" width="23.6" height="27.2" rx="2.6" fill="#f4f4f4" stroke="#000" stroke-width="2.8"/>
 <path d="M34.5,205 H49.5 V211.9 H34.5Z" fill="#000"/>
 <circle cx="42" cy="205.2" r="3.8" fill="#000"/>
 <rect x="34.4" y="217" width="9.4" height="2.7" fill="#000"/><rect x="46.8" y="217" width="3" height="2.7" fill="#000"/>
 <rect x="34.4" y="224.2" width="9.4" height="2.8" fill="#000"/><rect x="46.8" y="224.2" width="3" height="2.8" fill="#000"/>
 <!-- run -->
 <rect x="30.2" y="250.1" width="23.6" height="27.2" rx="2.6" fill="#f4f4f4" stroke="#000" stroke-width="2.8"/>
 <path d="M34.5,249 H49.5 V255 H34.5Z" fill="#000"/>
 <circle cx="42" cy="249.3" r="3.8" fill="#000"/>
 <circle cx="41.8" cy="265.8" r="8.0" fill="none" stroke="#000" stroke-width="1.6"/>
 <circle cx="41.8" cy="265.8" r="5.7" fill="#000"/>
 <path d="M39,265.5 L41.9,268.3 L46.2,263.7" fill="none" stroke="#fff" stroke-width="1.7"/>
 <!-- grid -->
 <rect x="28.9" y="294.9" width="26.2" height="26.4" fill="#000"/>
 <rect x="31.3" y="297.3" width="5.6" height="5.6" fill="#ccecfa"/><rect x="39.2" y="297.3" width="5.6" height="5.6" fill="#ccecfa"/><rect x="47.0" y="297.3" width="5.6" height="5.6" fill="#ccecfa"/>
 <rect x="31.3" y="305.2" width="5.6" height="5.6" fill="#bfe2f5"/><rect x="39.2" y="305.2" width="5.6" height="5.6" fill="#c4e5f7"/><rect x="47.0" y="305.2" width="5.6" height="5.6" fill="#c4e5f7"/>
 <rect x="31.3" y="313.4" width="5.6" height="5.6" fill="#8fcbeb"/><rect x="39.2" y="313.4" width="5.6" height="5.6" fill="#8fcbeb"/><rect x="47.0" y="313.4" width="5.6" height="5.6" fill="#8fcbeb"/>
 <g fill="#000"><circle cx="34.1" cy="300.3" r="1.3"/><circle cx="42" cy="300.3" r="1.3"/><circle cx="49.8" cy="300.3" r="1.3"/><circle cx="34.1" cy="308.1" r="1.3"/><circle cx="34.1" cy="316.2" r="1.3"/></g>
</svg>

<!-- graph palette -->
<div class="a" style="left:1115px;top:791px;width:19px;height:15px;background:linear-gradient(#707070,#5e5e5e);border-right:1px solid #444;border-bottom:1px solid #444"></div>
<div class="a" style="left:1135.5px;top:791px;width:18.5px;height:15px;background:linear-gradient(#d2d2d2,#c2c2c2);border-right:1px solid #999;border-bottom:1px solid #999"></div>
<div class="a" style="left:1155.5px;top:791px;width:18.5px;height:15px;background:linear-gradient(#d2d2d2,#c2c2c2);border-right:1px solid #999;border-bottom:1px solid #999"></div>
<svg class="a" style="left:0;top:0" width="1204" height="839">
 <path d="M1125,793.5 V805 M1119,798.3 H1131" stroke="#111" stroke-width="1.4"/>
 <circle cx="1125" cy="798.3" r="1.3" fill="#111"/>
 <path d="M1118.5,793.5 L1120.5,795 L1119.8,795.6 L1121,797 L1119.5,796.5 L1118.5,797.5Z" fill="#3bd43b"/>
 <circle cx="1146.8" cy="796.8" r="3.6" fill="#e6e6ff" stroke="#111" stroke-width="1.4"/>
 <path d="M1146.8,794.5 V799.3 M1144.6,796.8 H1149" stroke="#111" stroke-width="1"/>
 <path d="M1144.2,799.6 L1139.5,804.3" stroke="#111" stroke-width="1.8"/>
 <path d="M1146.8,803 L1150.6,803 L1148.7,805.3Z" fill="#111"/>
 <rect x="1138.5" y="793.5" width="1.6" height="1.6" fill="#3a6a3a"/>
 <rect x="1157.5" y="793.5" width="1.6" height="1.6" fill="#3a6a3a"/>
 <path d="M1161.5,804.5 L1158.5,799.8 L1159.5,799 L1161.5,801 M1161.5,801 V794.8 L1162.8,794 L1164,794.8 V799.5 M1164,794.8 V793.5 L1165.3,792.8 L1166.5,793.5 V799.5 M1166.5,794.2 L1167.8,793.6 L1169,794.3 V799.5 M1169,796 L1170.2,795.5 L1171.2,796.2 V801 L1169.8,804.5" fill="none" stroke="#111" stroke-width="0.9"/>
</svg>
</body></html>
